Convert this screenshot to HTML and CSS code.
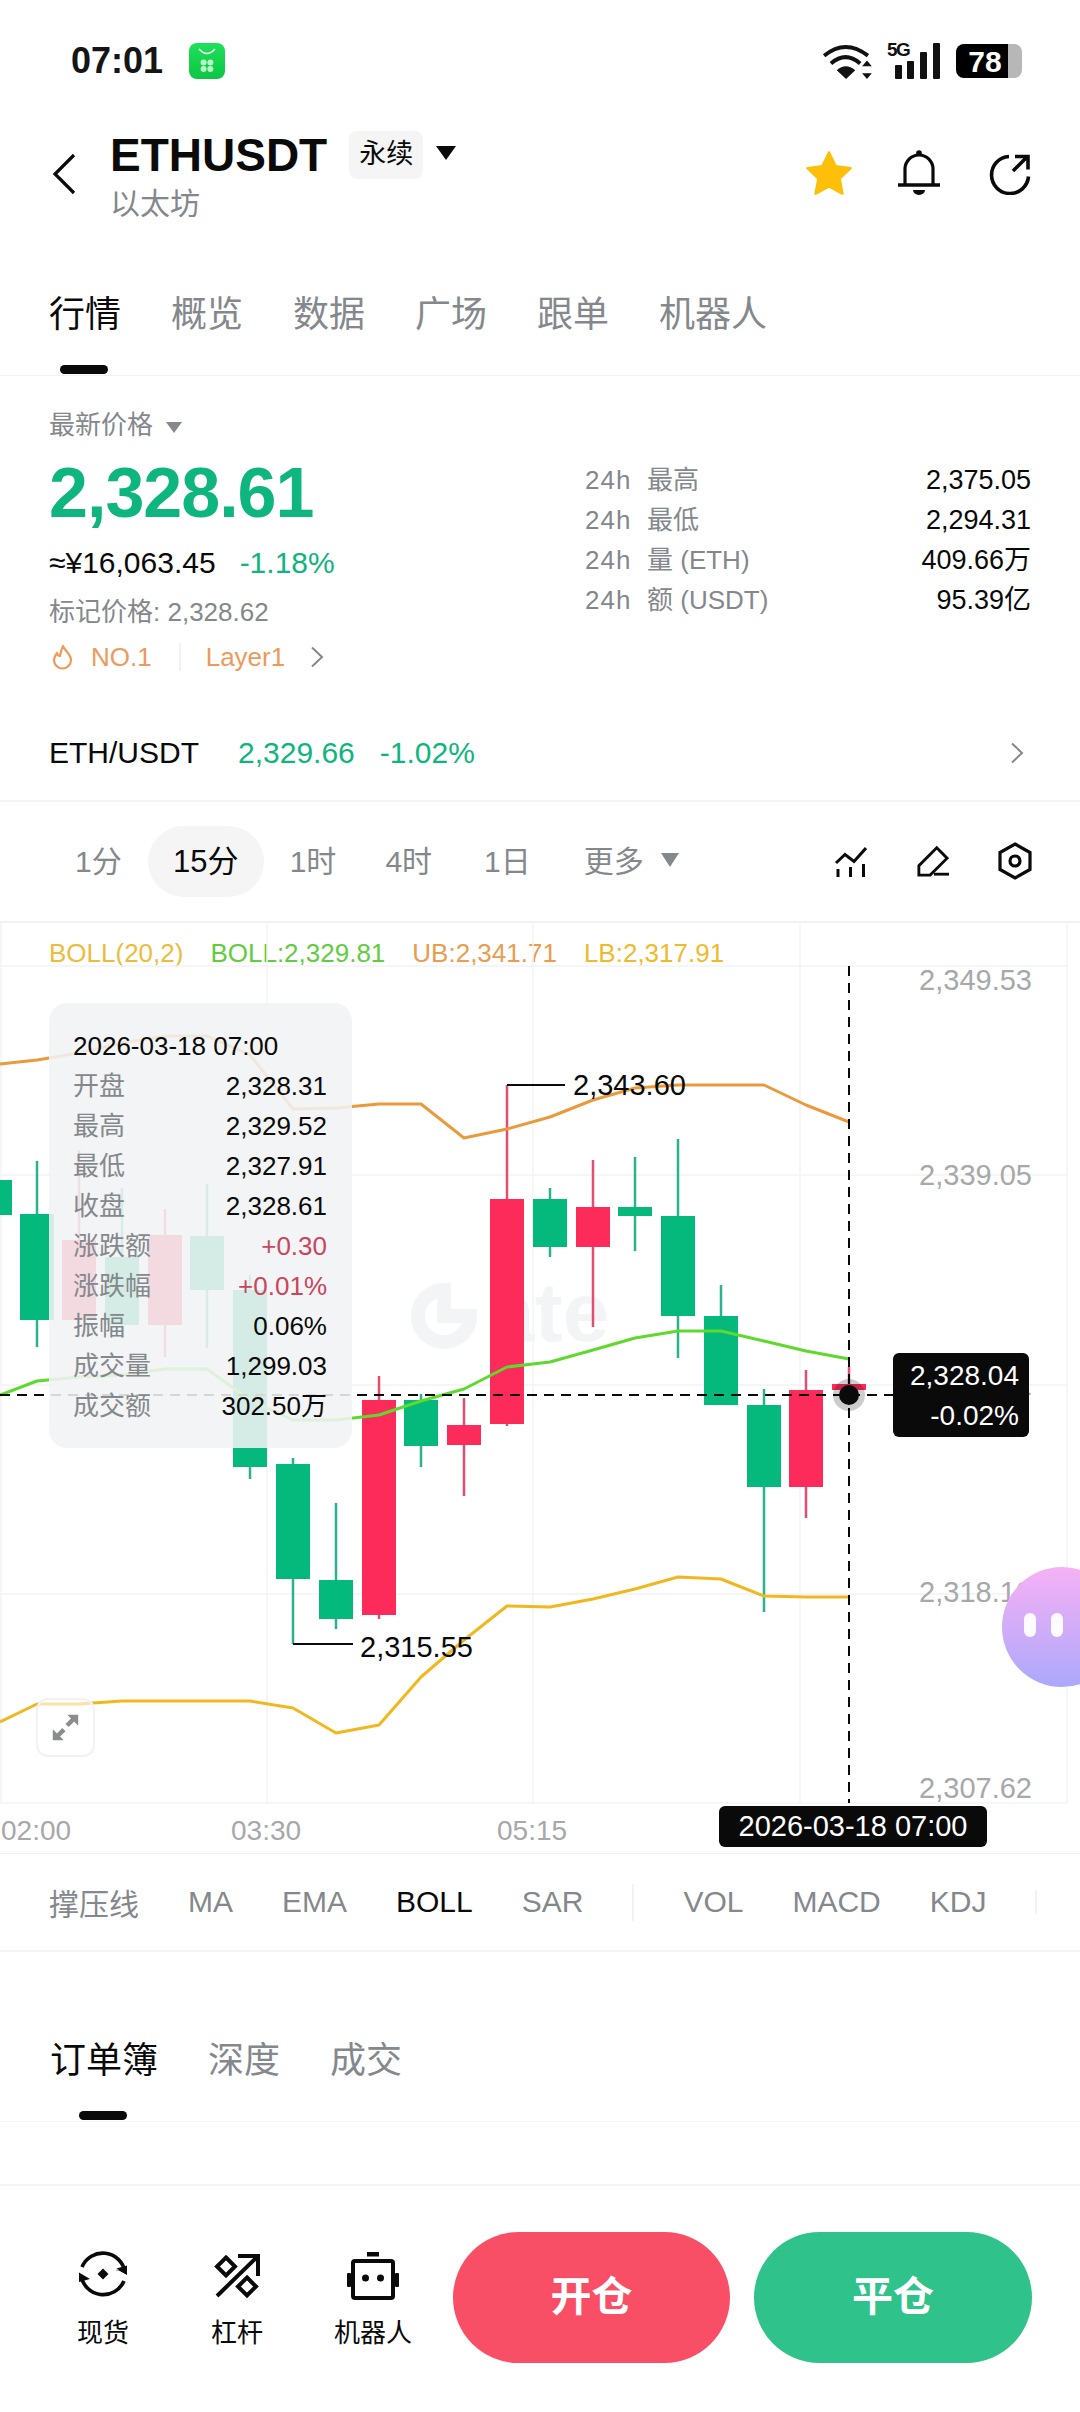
FILE: index.html
```html
<!DOCTYPE html>
<html lang="zh">
<head>
<meta charset="utf-8">
<title>ETHUSDT</title>
<link rel="stylesheet" href="styles.css">
</head>
<body>
<div class="page">
  <div class="status">
    <span class="clock">07:01</span>
    <svg class="market" viewBox="0 0 36 36"><defs><linearGradient id="mk" x1="0" y1="0" x2="0" y2="1"><stop offset="0" stop-color="#1fe05a"/><stop offset="1" stop-color="#0cc544"/></linearGradient></defs><rect width="36" height="36" rx="8" fill="url(#mk)"/><path d="M10 6q8 9 16 0" fill="none" stroke="#fff" stroke-width="1.3"/><g fill="#b8f5c8"><circle cx="14.6" cy="19.5" r="3"/><circle cx="21.4" cy="19.5" r="3"/><circle cx="14.6" cy="26" r="3"/><circle cx="21.4" cy="26" r="3"/></g></svg>
    <span class="grow"></span>
    <svg class="wifi" viewBox="0 0 52 38"><g fill="none" stroke="#111" stroke-width="4"><path d="M2 13Q24 -5 47 13"/><path d="M9 21Q24 8 39 21"/></g><path d="M15 28Q24 20 34 28L24.500 37Z" fill="#111"/><path d="M46 18l5 6H41ZM46 37l5-6H41Z" fill="#111"/></svg>
    <span class="sig">
      <span class="fiveg">5G</span>
      <svg class="bars" viewBox="0 0 46 36"><g fill="#111"><rect x="1" y="22" width="7" height="14" rx="1"/><rect x="13" y="18" width="7" height="18" rx="1"/><rect x="26" y="9" width="7" height="27" rx="1"/><rect x="39" y="0" width="7" height="36" rx="1"/></g></svg>
    </span>
    <span class="battery"><span class="level">78</span><span class="rest"></span></span>
  </div>

  <div class="header">
    <svg class="back" viewBox="0 0 24 42"><path d="M22 2L3 21l19 19" fill="none" stroke="#0a0a0a" stroke-width="3.200"/></svg>
    <div class="title-col">
      <div class="title-row">
        <span class="symbol">ETHUSDT</span>
        <span class="tag">永续</span>
        <span class="tri-dark"></span>
      </div>
      <div class="subname">以太坊</div>
    </div>
    <span class="grow"></span>
    <svg class="star" viewBox="0 0 48 46"><path d="M24 2.500l6.600 13.700 15 2-11 10.400 2.800 15-13.400-7.300-13.400 7.300 2.800-15-11-10.400 15-2z" fill="#fdbf0a" stroke="#fdbf0a" stroke-width="2.500" stroke-linejoin="round"/></svg>
    <svg class="bell" viewBox="0 0 42 46"><path d="M7 35V19a14 14 0 0 1 28 0v16" fill="none" stroke="#0a0a0a" stroke-width="3.200"/><path d="M0 35h42" stroke="#0a0a0a" stroke-width="3.500"/><circle cx="21" cy="3" r="2.800" fill="#0a0a0a"/><path d="M15 40h12a6 5 0 0 1-12 0z" fill="#0a0a0a"/></svg>
    <svg class="share" viewBox="0 0 42 42"><path d="M20 3.500a18.500 18.500 0 1 0 19.500 20" fill="none" stroke="#0a0a0a" stroke-width="3.600"/><path d="M24 18L38 4M26 3.500h13v13" fill="none" stroke="#0a0a0a" stroke-width="3.600"/></svg>
  </div>

  <div class="tabs main-tabs">
    <span class="tab active">行情</span>
    <span class="tab">概览</span>
    <span class="tab">数据</span>
    <span class="tab">广场</span>
    <span class="tab">跟单</span>
    <span class="tab">机器人</span>
  </div>

  <div class="summary">
    <div class="sum-left">
      <div class="sum-label">最新价格<span class="tri-gray small"></span></div>
      <div class="price">2,328.61</div>
      <div class="fiat"><span>≈¥16,063.45</span><span class="green">-1.18%</span></div>
      <div class="mark">标记价格: 2,328.62</div>
      <div class="hot">
        <svg class="flame" viewBox="0 0 24 26"><path d="M12 2c1 4 8 8 8 14a8.500 8.500 0 0 1-17 0c0-3 1.500-5 3-7 .5 2 1.500 3 3 3 .5-3 1-6 3-10z" fill="none" stroke="#ee9a5c" stroke-width="2.200" stroke-linejoin="round"/></svg>
        <span>NO.1</span>
        <i class="vline"></i>
        <span>Layer1</span>
        <svg class="chev" viewBox="0 0 14 22"><path d="M2 1.500L12 11 2 20.500" fill="none" stroke="#84888c" stroke-width="2"/></svg>
      </div>
    </div>
    <div class="sum-right">
      <div class="stat"><span class="k"><b>24h</b>最高</span><span class="v">2,375.05</span></div>
      <div class="stat"><span class="k"><b>24h</b>最低</span><span class="v">2,294.31</span></div>
      <div class="stat"><span class="k"><b>24h</b>量 (ETH)</span><span class="v">409.66万</span></div>
      <div class="stat"><span class="k"><b>24h</b>额 (USDT)</span><span class="v">95.39亿</span></div>
    </div>
  </div>

  <div class="spot">
    <span class="pair">ETH/USDT</span>
    <span class="green spot-price">2,329.66</span>
    <span class="green spot-pct">-1.02%</span>
    <span class="grow"></span>
    <svg class="chev" viewBox="0 0 14 22"><path d="M2 1.500L12 11 2 20.500" fill="none" stroke="#84888c" stroke-width="2"/></svg>
  </div>

  <div class="periods">
    <span class="per p-1m">1分</span>
    <span class="per pill">15分</span>
    <span class="per p-1h">1时</span>
    <span class="per p-4h">4时</span>
    <span class="per p-1d">1日</span>
    <span class="per p-more">更多<span class="tri-gray"></span></span>
    <span class="grow"></span>
    <svg class="ptool" viewBox="0 0 32 32"><path d="M1 18L10 9.500l9 7L31 3" fill="none" stroke="#0a0a0a" stroke-width="3"/><path d="M3 24v8M15.500 22v10M28.500 19v13" stroke="#0a0a0a" stroke-width="3"/></svg>
    <svg class="ptool" viewBox="0 0 34 32"><path d="M2 31V21L21 2l11 11L14 31H2z" fill="none" stroke="#0a0a0a" stroke-width="3" stroke-linejoin="miter"/><path d="M18 30h16" stroke="#0a0a0a" stroke-width="3"/></svg>
    <svg class="ptool hex" viewBox="0 0 34 38"><path d="M17 2l15 8.500v17L17 36 2 27.500v-17z" fill="none" stroke="#0a0a0a" stroke-width="3.200"/><circle cx="17" cy="19" r="5" fill="none" stroke="#0a0a0a" stroke-width="3.200"/></svg>
  </div>

  <div class="chart">
    <div class="legend">
      <span class="c-boll">BOLL(20,2)</span>
      <span class="c-mid">BOLL:2,329.81</span>
      <span class="c-ub">UB:2,341.71</span>
      <span class="c-lb">LB:2,317.91</span>
    </div>
    <svg class="plot" viewBox="0 923 1080 931">
      <g class="grid">
        <path d="M0 966H1067M0 1175H1067M0 1385H1067M0 1594H1067M0 1803H1067"/>
        <path d="M1 923V1803M267 923V1803M533 923V1803M800 923V1803M1067 923V1803"/>
      </g>
      <g class="wm"><path d="M444 1290a26 26 0 1 0 26 26h-26v-26z" fill="none" stroke="#f3f4f5" stroke-width="14"/><text x="488" y="1341">ate</text></g>
      <g class="gu">
        <path d="M-5 1160V1240"/><path d="M37 1161V1347"/><path d="M122 1188V1338"/><path d="M207 1184V1348"/><path d="M250 1275V1479"/><path d="M293 1458V1644"/><path d="M336 1503V1629"/><path d="M421 1394V1467"/><path d="M550 1188V1257"/><path d="M635 1157V1251"/><path d="M678 1139V1358"/><path d="M721 1285V1405"/><path d="M764 1389V1612"/>
      </g>
      <g class="gb">
        <rect x="-22" y="1180" width="34" height="35"/><rect x="20" y="1214" width="34" height="106"/><rect x="105" y="1257" width="34" height="68"/><rect x="190" y="1236" width="34" height="54"/><rect x="233" y="1290" width="34" height="177"/><rect x="276" y="1464" width="34" height="115"/><rect x="319" y="1580" width="34" height="39"/><rect x="404" y="1400" width="34" height="46"/><rect x="533" y="1199" width="34" height="48"/><rect x="618" y="1207" width="34" height="9"/><rect x="661" y="1216" width="34" height="100"/><rect x="704" y="1316" width="34" height="89"/><rect x="747" y="1405" width="34" height="82"/>
      </g>
      <g class="ru">
        <path d="M79 1150V1320"/><path d="M165 1209V1357"/><path d="M379 1376V1619"/><path d="M464 1398V1496"/><path d="M507 1085V1426"/><path d="M593 1160V1327"/><path d="M806 1370V1518"/><path d="M849 1367V1400"/>
      </g>
      <g class="rb">
        <rect x="62" y="1240" width="34" height="80"/><rect x="148" y="1235" width="34" height="90"/><rect x="362" y="1400" width="34" height="215"/><rect x="447" y="1425" width="34" height="20"/><rect x="490" y="1199" width="34" height="225"/><rect x="576" y="1207" width="34" height="40"/><rect x="789" y="1390" width="34" height="97"/><rect x="832" y="1384" width="34" height="6"/>
      </g>
      <g class="lines">
        <polyline class="l-ub" points="0,1064 37,1060 79,1053 122,1043 165,1036 207,1036 250,1055 293,1109 336,1108 379,1104 421,1104 464,1138 507,1129 550,1117 593,1100 635,1088 678,1085 721,1085 764,1085 806,1105 849,1122"/>
        <polyline class="l-mid" points="0,1395 37,1381 79,1377 122,1375 165,1369 207,1369 250,1400 293,1420 336,1420 379,1415 421,1401 464,1389 507,1367 550,1362 593,1350 635,1338 678,1331 721,1331 764,1341 806,1351 849,1359"/>
        <polyline class="l-lb" points="0,1722 37,1704 79,1704 122,1701 165,1701 207,1701 250,1701 293,1708 336,1733 379,1725 421,1677 464,1640 507,1606 550,1607 593,1599 635,1589 678,1577 721,1579 764,1596 806,1597 849,1597"/>
      </g>
      <path class="leader" d="M507 1085H565M293 1644H353"/>
      <path class="dash" d="M849 966V1803M0 1395H893"/>
      <circle cx="849" cy="1395" r="16" fill="#000" fill-opacity=".2"/>
      <circle cx="849" cy="1395" r="10" fill="#0a0a0a"/>
      <g class="ax">
        <text x="1032" y="990">2,349.53</text>
        <text x="1032" y="1185">2,339.05</text>
        <text x="1032" y="1395">2,328.61</text>
        <text x="1032" y="1602">2,318.10</text>
        <text x="1032" y="1798">2,307.62</text>
      </g>
      <g class="tm">
        <text x="1" y="1840">02:00</text>
        <text x="231" y="1840">03:30</text>
        <text x="497" y="1840">05:15</text>
      </g>
      <g class="hl">
        <text x="573" y="1095">2,343.60</text>
        <text x="360" y="1657">2,315.55</text>
      </g>
    </svg>

    <div class="ohlc">
      <div class="ohlc-date">2026-03-18 07:00</div>
      <div class="row"><span>开盘</span><b>2,328.31</b></div>
      <div class="row"><span>最高</span><b>2,329.52</b></div>
      <div class="row"><span>最低</span><b>2,327.91</b></div>
      <div class="row"><span>收盘</span><b>2,328.61</b></div>
      <div class="row"><span>涨跌额</span><b class="red">+0.30</b></div>
      <div class="row"><span>涨跌幅</span><b class="red">+0.01%</b></div>
      <div class="row"><span>振幅</span><b>0.06%</b></div>
      <div class="row"><span>成交量</span><b>1,299.03</b></div>
      <div class="row"><span>成交额</span><b>302.50万</b></div>
    </div>

    <div class="price-tag"><div>2,328.04</div><div>-0.02%</div></div>
    <div class="time-tag">2026-03-18 07:00</div>

    <div class="expand">
      <svg viewBox="0 0 32 32"><path d="M18 2h12v12l-4.500-4.500-6 6-3.500-3.500 6-6zM14 30H2V18l4.500 4.500 6-6 3.500 3.500-6 6z" fill="#8a8c8e"/></svg>
    </div>
    <div class="blob"><i></i><i></i></div>
  </div>

  <div class="indicators">
    <span>撑压线</span><span>MA</span><span>EMA</span><span class="on">BOLL</span><span>SAR</span>
    <i class="ind-sep"></i>
    <span>VOL</span><span>MACD</span><span>KDJ</span>
    <i class="ind-sep faint"></i>
  </div>

  <div class="tabs depth-tabs">
    <span class="tab active">订单簿</span>
    <span class="tab">深度</span>
    <span class="tab">成交</span>
  </div>
  <div class="empty"></div>

  <div class="bottom">
    <div class="act act-spot">
      <svg viewBox="0 0 52 52"><path d="M5 19A22.500 22.500 0 0 1 48 24" fill="none" stroke="#0a0a0a" stroke-width="3.600"/><path d="M49.500 26.500L40 21.500l-1 1 11-2z" fill="#0a0a0a"/><path d="M50 27L39.500 20.500 50 17.500z" fill="#0a0a0a"/><path d="M47 33A22.500 22.500 0 0 1 4 27" fill="none" stroke="#0a0a0a" stroke-width="3.600"/><path d="M2 24.500L13 31 2 34z" fill="#0a0a0a"/><path d="M26 20.500l5.500 5.500-5.500 5.500-5.500-5.500z" fill="#0a0a0a"/></svg>
      <span>现货</span>
    </div>
    <div class="act act-lev">
      <svg viewBox="0 0 46 48"><path d="M3 44L44 4M24 4h20v20" fill="none" stroke="#0a0a0a" stroke-width="4"/><path d="M12 5.500l9 9-9 9-9-9zM33 25.500l9 9-9 9-9-9z" fill="none" stroke="#0a0a0a" stroke-width="4"/></svg>
      <span>杠杆</span>
    </div>
    <div class="act act-bot">
      <svg viewBox="0 0 52 48"><rect x="6" y="9" width="40" height="37" rx="2" fill="none" stroke="#0a0a0a" stroke-width="4"/><rect x="20" y="0" width="12" height="4.500" fill="#0a0a0a"/><rect x="0" y="21" width="4" height="14" rx="1" fill="#0a0a0a"/><rect x="48" y="21" width="4" height="14" rx="1" fill="#0a0a0a"/><circle cx="18.500" cy="26" r="3.500" fill="#0a0a0a"/><circle cx="33.500" cy="26" r="3.500" fill="#0a0a0a"/></svg>
      <span>机器人</span>
    </div>
    <div class="btn btn-open">开仓</div>
    <div class="btn btn-close">平仓</div>
  </div>
</div>
</body>
</html>
```
FILE: styles.css
```css
* { box-sizing: border-box; margin: 0; padding: 0; }
html, body { width: 1080px; height: 2412px; background: #fff; overflow: hidden; }
body { font-family: "Liberation Sans", "Noto Sans CJK SC", sans-serif; color: #0a0a0a; }
.page { width: 1080px; height: 2412px; display: flex; flex-direction: column; overflow: hidden; position: relative; }
.grow { flex: 1; }
.green { color: #0fb57f; }
.red { color: #c8475c; }

/* status bar */
.status { height: 124px; display: flex; align-items: center; padding: 0 58px 2px 71px; flex: none; }
.clock { font-size: 36px; font-weight: 700; color: #151515; line-height: 40px; }
.market { width: 36px; height: 36px; margin-left: 26px; }
.wifi { width: 51px; height: 37px; }
.sig { position: relative; width: 46px; height: 36px; margin-left: 21px; display: block; }
.bars { width: 46px; height: 36px; display: block; }
.fiveg { position: absolute; left: -7px; top: -3px; font-size: 19px; line-height: 20px; font-weight: 700; letter-spacing: -1.5px; color: #111; }
.battery { display: flex; margin-left: 16px; height: 34px; width: 66px; }
.level { width: 52px; background: #000; color: #fff; font-size: 30px; font-weight: 700; line-height: 35px; text-align: center; border-radius: 8px 0 0 8px; padding-left: 6px; }
.rest { width: 14px; background: #b7b7b7; border-radius: 0 8px 8px 0; }

/* header */
.header { height: 128px; display: flex; align-items: flex-start; padding: 7px 49px 0 52px; flex: none; }
.back { width: 24px; height: 42px; margin-top: 22px; }
.title-col { margin-left: 34px; }
.title-row { display: flex; align-items: center; height: 48px; }
.symbol { font-size: 46px; font-weight: 700; line-height: 48px; color: #0a0a0a; }
.tag { height: 48px; width: 74px; margin-left: 22px; background: #f5f5f5; border-radius: 8px; font-size: 27px; line-height: 46px; text-align: center; }
.tri-dark { margin-left: 13px; width: 0; height: 0; border-left: 10px solid transparent; border-right: 10px solid transparent; border-top: 14px solid #0a0a0a; margin-top: -5px; }
.subname { margin-top: 7px; font-size: 30px; line-height: 36px; color: #84888c; }
.star { width: 48px; height: 46px; margin-top: 19px; }
.bell { width: 42px; height: 46px; margin-top: 19px; margin-left: 45px; }
.share { width: 42px; height: 42px; margin-top: 22px; margin-left: 49px; }

/* tabs */
.tabs { display: flex; flex: none; border-bottom: 1px solid #f1f2f3; padding-left: 49px; gap: 50px; }
.tab { position: relative; font-size: 36px; line-height: 48px; color: #84888c; }
.tab.active { color: #0a0a0a; }
.tab.active::after { content: ""; position: absolute; bottom: 1px; height: 9px; width: 48px; background: #0a0a0a; border-radius: 5px; }
.main-tabs { height: 124px; padding-top: 39px; }
.main-tabs .tab.active::after { left: 11px; }
.depth-tabs { height: 170px; padding-top: 85px; padding-left: 50px; }
.depth-tabs .tab.active::after { left: 29px; }

/* summary */
.summary { height: 329px; flex: none; display: flex; justify-content: space-between; padding: 33px 49px 0; }
.sum-label { font-size: 26px; line-height: 32px; color: #84888c; display: flex; align-items: center; }
.tri-gray { display: inline-block; width: 0; height: 0; border-left: 9px solid transparent; border-right: 9px solid transparent; border-top: 14px solid #84888c; }
.tri-gray.small { margin-left: 13px; margin-top: 4px; border-left-width: 8px; border-right-width: 8px; border-top-width: 11px; }
.price { margin-top: 12px; font-size: 70px; font-weight: 700; line-height: 80px; color: #0fb57f; letter-spacing: -1px; }
.fiat { margin-top: 10px; font-size: 30px; line-height: 40px; display: flex; gap: 24px; }
.mark { margin-top: 11px; font-size: 26px; line-height: 36px; color: #84888c; }
.hot { margin-top: 9px; height: 36px; display: flex; align-items: center; color: #ee9a5c; font-size: 26px; }
.flame { width: 24px; height: 26px; margin-left: 2px; margin-right: 16px; }
.vline { width: 2px; height: 28px; background: #f1f2f3; margin: 0 25px 0 27px; }
.chev { width: 14px; height: 22px; margin-left: 25px; }
.sum-right { width: 446px; padding-top: 51px; }
.stat { display: flex; justify-content: space-between; height: 40px; line-height: 40px; font-size: 26px; }
.stat .k { color: #84888c; }
.stat .k b { font-weight: 400; display: inline-block; width: 62px; letter-spacing: 1px; }
.stat .v { font-size: 27px; }

/* spot row */
.spot { height: 97px; flex: none; display: flex; align-items: center; padding: 0 56px 0 49px; border-bottom: 2px solid #f1f2f3; font-size: 30px; }
.spot-price { margin-left: 39px; }
.spot-pct { margin-left: 25px; }
.spot .chev { margin: 0; }

/* periods */
.periods { height: 121px; flex: none; display: flex; align-items: center; padding: 0 48px 0 75px; border-bottom: 2px solid #f1f2f3; font-size: 30px; color: #84888c; }
.per { line-height: 71px; }
.pill { width: 116px; height: 71px; margin-left: 26px; border-radius: 36px; background: #f5f5f5; color: #0a0a0a; text-align: center; font-size: 31px; }
.p-1h { margin-left: 26px; }
.p-4h { margin-left: 49px; }
.p-1d { margin-left: 52px; }
.p-more { margin-left: 53px; display: flex; align-items: center; }
.p-more .tri-gray { margin-left: 17px; margin-top: -4px; }
.ptool { width: 32px; height: 32px; margin-left: 50px; margin-top: -1px; }
.ptool.hex { width: 34px; height: 38px; margin-left: 49px; }

/* chart */
.chart { position: relative; height: 931px; flex: none; border-bottom: 1px solid #f1f2f3; }
.legend { position: relative; display: flex; gap: 27px; padding: 15px 0 0 49px; font-size: 26px; line-height: 30px; }
.c-boll { color: #ecbc3c; }
.c-mid { color: #62cc3f; }
.c-ub { color: #e99d4e; }
.c-lb { color: #efbb2c; }
.plot { position: absolute; left: 0; top: 0; width: 1080px; height: 931px; display: block; }
.grid path { fill: none; stroke: #f3f4f5; stroke-width: 1.500; }
.wm text { font-size: 84px; font-weight: 700; fill: #f3f4f5; }
.gu path { stroke: #2ab28c; stroke-width: 2.500; }
.ru path { stroke: #e14e70; stroke-width: 2.500; }
.gb rect { fill: #05b97c; }
.rb rect { fill: #fc2b5a; }
.lines polyline { fill: none; stroke-width: 3; stroke-linejoin: round; }
.l-ub { stroke: #ea9a3c; }
.l-mid { stroke: #5ed92e; }
.l-lb { stroke: #f0b71f; }
.leader { fill: none; stroke: #0a0a0a; stroke-width: 2; }
.dash { fill: none; stroke: #0a0a0a; stroke-width: 2; stroke-dasharray: 10 7; }
.ax text { font-size: 29px; fill: #a6a8aa; text-anchor: end; }
.tm text { font-size: 28px; fill: #a6a8aa; }
.hl text { font-size: 29px; fill: #0a0a0a; }

.ohlc { position: absolute; left: 49px; top: 80px; width: 303px; height: 445px; border-radius: 18px; background: rgba(241, 243, 244, .88); padding: 23px 25px 0 24px; font-size: 26px; line-height: 40px; }
.ohlc-date { height: 40px; }
.row { display: flex; justify-content: space-between; height: 40px; }
.row span { color: #84888c; }
.row b { font-weight: 400; }

.price-tag { position: absolute; left: 893px; top: 430px; width: 136px; height: 84px; background: #0a0a0a; border-radius: 6px; color: #fff; font-size: 28px; line-height: 40px; text-align: right; padding: 3px 10px 0 0; }
.time-tag { position: absolute; left: 719px; top: 883px; width: 268px; height: 41px; background: #0a0a0a; border-radius: 6px; color: #fff; font-size: 29px; line-height: 41px; text-align: center; }
.expand { position: absolute; left: 36px; top: 775px; width: 59px; height: 59px; background: rgba(255,255,255,.6); border: 2px solid #f1f2f3; border-radius: 12px; padding: 13px; }
.expand svg { width: 29px; height: 29px; display: block; }
.blob { position: absolute; left: 1002px; top: 644px; width: 120px; height: 120px; border-radius: 50%; background: linear-gradient(180deg, #f6b1f5, #aca8fb); display: flex; gap: 15px; padding: 46px 0 0 22px; }
.blob i { width: 12px; height: 24px; border-radius: 6px; background: #fff; opacity: .95; }

/* indicators */
.indicators { height: 98px; flex: none; display: flex; align-items: center; gap: 49px; padding-left: 49px; border-bottom: 2px solid #f1f2f3; font-size: 30px; color: #84888c; }
.indicators .on { color: #0a0a0a; }
.ind-sep { width: 2px; height: 37px; background: #f1f2f3; }
.ind-sep.faint { height: 24px; }

/* empty */
.empty { height: 64px; flex: none; border-bottom: 2px solid #f1f2f3; }

/* bottom */
.bottom { flex: 1; display: flex; padding: 46px 48px 0 0; align-items: flex-start; }
.act { display: flex; flex-direction: column; align-items: center; font-size: 26px; line-height: 34px; padding-top: 16px; }
.act svg { display: block; height: 52px; }
.act span { margin-top: 16px; }
.act-spot { width: 90px; margin-left: 58px; }
.act-spot svg { width: 52px; }
.act-lev { width: 90px; margin-left: 44px; }
.act-lev svg { width: 46px; height: 48px; margin: 4px 0 0; }
.act-bot { width: 90px; margin-left: 46px; }
.act-bot svg { width: 52px; height: 48px; margin: 4px 0 0; }
.btn { height: 131px; border-radius: 66px; color: #fff; font-size: 41px; font-weight: 700; line-height: 131px; text-align: center; }
.btn-open { width: 277px; margin-left: 35px; background: #f94f66; }
.btn-close { width: 278px; margin-left: 24px; background: #2fc28a; }
```
